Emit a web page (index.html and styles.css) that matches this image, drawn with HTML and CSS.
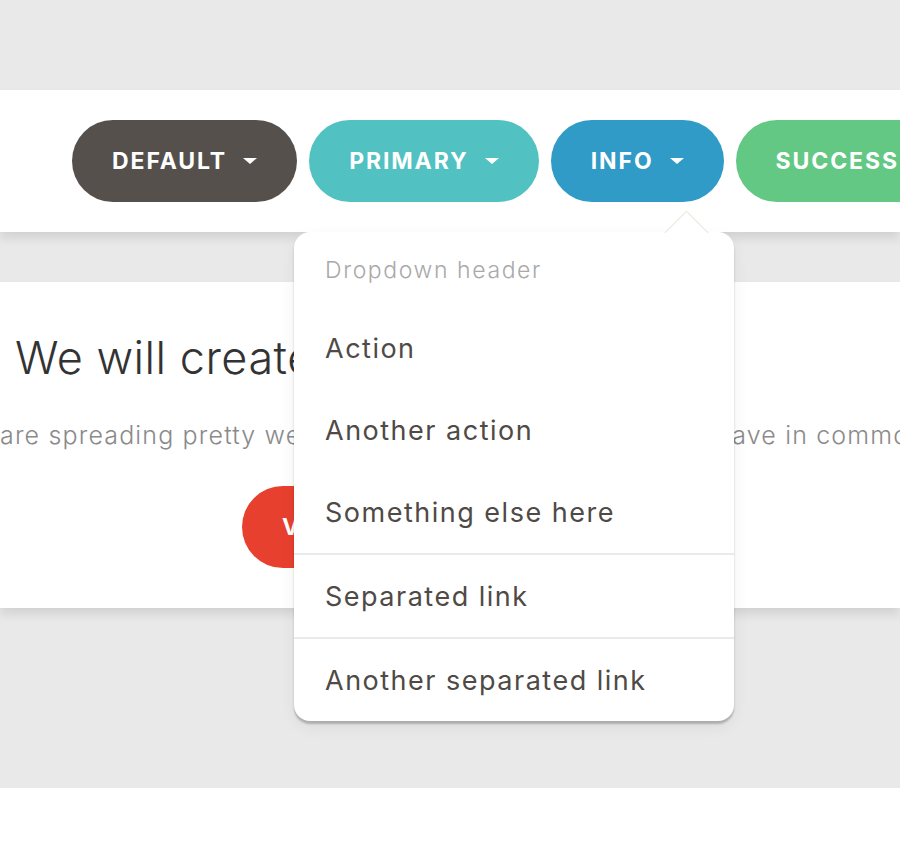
FILE: index.html
```html
<!DOCTYPE html>
<html>
<head>
<meta charset="utf-8">
<link rel="stylesheet" href="styles.css">
</head>
<body>
<div class="page">
  <div class="top-space"></div>
  <div class="navbar">
    <button class="btn btn-default">DEFAULT <span class="caret"></span></button>
    <button class="btn btn-primary">PRIMARY <span class="caret"></span></button>
    <button class="btn btn-info">INFO <span class="caret"></span></button>
    <button class="btn btn-success">SUCCESS <span class="caret"></span></button>
    <button class="btn btn-warning">WARNING <span class="caret"></span></button>
  </div>
  <div class="gap"></div>
  <div class="card">
    <h1 class="title">We will create something new</h1>
    <p class="lead">are spreading pretty well the things you and your family have in common</p>
    <div class="actions">
      <button class="btn btn-danger">VIEW ALL COMPONENTS</button>
    </div>
  </div>
  <div class="gap-bottom"></div>
  <div class="footer"></div>

  <div class="dropdown">
    <div class="dropdown-arrow"></div>
    <div class="dropdown-header">Dropdown header</div>
    <a class="dropdown-item">Action</a>
    <a class="dropdown-item">Another action</a>
    <a class="dropdown-item">Something else here</a>
    <div class="divider"></div>
    <a class="dropdown-item">Separated link</a>
    <div class="divider"></div>
    <a class="dropdown-item">Another separated link</a>
  </div>
</div>
</body>
</html>
```
FILE: styles.css
```css
html, body {
  margin: 0;
  padding: 0;
  height: 100%;
  overflow: hidden;
}
body {
  background: #e9e9e9;
  font-family: "Inter", "Open Sans", sans-serif;
}
.page {
  position: relative;
  width: 900px;
  height: 866px;
  overflow: hidden;
}
.top-space {
  height: 90px;
}
.navbar {
  position: relative;
  z-index: 1;
  height: 142px;
  background: #fff;
  box-shadow: 0 6px 10px rgba(0, 0, 0, 0.10);
  display: flex;
  align-items: center;
  gap: 12px;
  padding-left: 72px;
  white-space: nowrap;
}
.btn {
  flex: none;
  height: 82px;
  border: none;
  border-radius: 41px;
  padding: 0 40px;
  font-family: "Inter", sans-serif;
  font-weight: 700;
  font-size: 23px;
  letter-spacing: 1.9px;
  color: #fff;
  display: inline-flex;
  align-items: center;
  gap: 16px;
  white-space: nowrap;
}
.caret {
  width: 0;
  height: 0;
  border-left: 7px solid transparent;
  border-right: 7px solid transparent;
  border-top: 6px solid #fff;
}
.btn-default { background: #55504c; }
.btn-primary { background: #51c1c2; }
.btn-info { background: #2f9bc6; }
.btn-success { background: #64c885; }
.btn-warning { background: #f3bb45; }
.btn-danger { background: #e8402f; }
.gap {
  height: 50px;
}
.card {
  height: 326px;
  background: #fff;
  box-shadow: 0 6px 10px rgba(0, 0, 0, 0.10);
  display: flex;
  flex-direction: column;
  overflow: hidden;
  white-space: nowrap;
}
.title {
  margin: 48px 0 0 15px;
  font-size: 45px;
  line-height: 56px;
  font-weight: 300;
  color: #333;
  letter-spacing: 0.5px;
}
.lead {
  margin: 31px 0 0 0;
  font-size: 25px;
  line-height: 36px;
  font-weight: 300;
  color: #8a8a8a;
  letter-spacing: 1.15px;
}
.actions {
  margin-top: 33px;
  padding-left: 242px;
  display: flex;
}
.gap-bottom {
  height: 180px;
}
.footer {
  height: 78px;
  background: #fff;
}
.dropdown {
  position: absolute;
  left: 294px;
  top: 232px;
  z-index: 5;
  width: 440px;
  background: #fff;
  border-radius: 16px;
  box-shadow: 0 3px 2px rgba(0, 0, 0, 0.22), 0 6px 16px rgba(0, 0, 0, 0.06);
  display: flex;
  flex-direction: column;
}
.dropdown-arrow {
  position: absolute;
  left: 377px;
  top: -15px;
  width: 30px;
  height: 30px;
  background: #fff;
  transform: rotate(45deg);
  border-top: 1px solid rgba(200, 185, 150, 0.35);
  border-left: 1px solid rgba(200, 185, 150, 0.35);
  z-index: -1;
}
.dropdown-header {
  height: 75px;
  padding-left: 31px;
  display: flex;
  align-items: center;
  font-size: 23px;
  font-weight: 300;
  color: #a9a9a9;
  letter-spacing: 1.6px;
  position: relative;
}
.dropdown-item {
  height: 82px;
  padding-left: 31px;
  display: flex;
  align-items: center;
  font-size: 27px;
  font-weight: 400;
  color: #4f4a46;
  letter-spacing: 1.5px;
}
.divider {
  height: 2px;
  background: #e8ebed;
}
```
